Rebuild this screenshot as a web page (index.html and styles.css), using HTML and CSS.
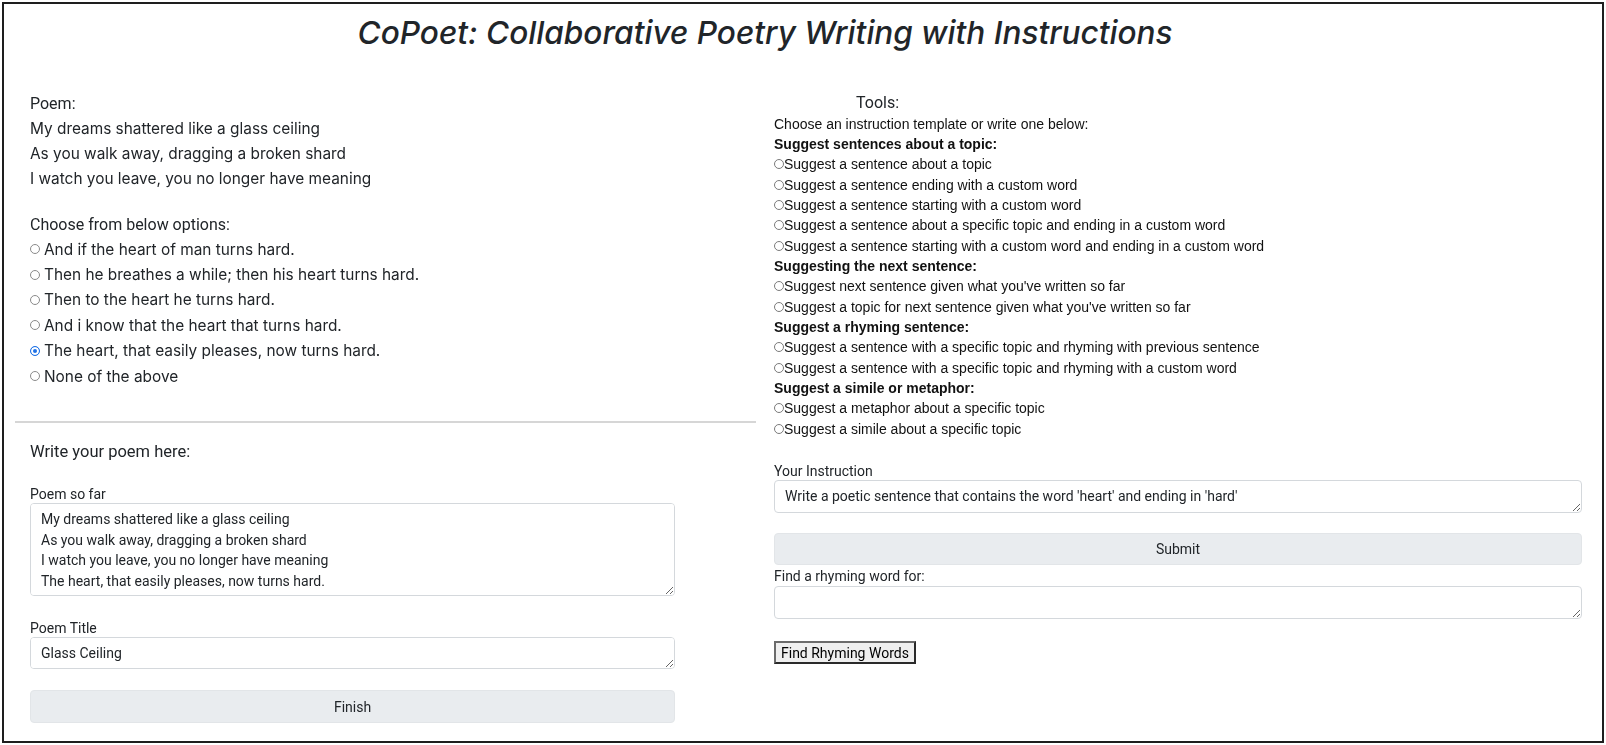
FILE: index.html
```html
<!DOCTYPE html>
<html lang="en">
<head>
    <meta charset="UTF-8">
    <meta name="viewport" content="width=device-width, initial-scale=1.0">
    <title>CoPoet: Collaborative Poetry Writing with Instructions</title>
    <link rel="stylesheet" href="styles.css">
</head>
<body>
    <div class="page">
        <h1 class="title">CoPoet: Collaborative Poetry Writing with Instructions</h1>

        <div class="columns">
            <div class="left-col">
                <div class="heading">Poem:</div>
                <div class="poem-lines">
                    <div>My dreams shattered like a glass ceiling</div>
                    <div>As you walk away, dragging a broken shard</div>
                    <div>I watch you leave, you no longer have meaning</div>
                </div>

                <div class="heading options-head">Choose from below options:</div>
                <label class="option"><input type="radio" name="next"> And if the heart of man turns hard.</label>
                <label class="option"><input type="radio" name="next"> Then he breathes a while; then his heart turns hard.</label>
                <label class="option"><input type="radio" name="next"> Then to the heart he turns hard.</label>
                <label class="option"><input type="radio" name="next"> And i know that the heart that turns hard.</label>
                <label class="option"><input type="radio" name="next" checked> The heart, that easily pleases, now turns hard.</label>
                <label class="option"><input type="radio" name="next"> None of the above</label>

                <hr class="divider">

                <div class="heading write-head">Write your poem here:</div>
                <div class="poem-form">
                    <label class="field-label first">Poem so far</label>
                    <textarea class="field poem-box">My dreams shattered like a glass ceiling
As you walk away, dragging a broken shard
I watch you leave, you no longer have meaning
The heart, that easily pleases, now turns hard.</textarea>

                    <label class="field-label title-label">Poem Title</label>
                    <textarea class="field short-box">Glass Ceiling</textarea>

                    <button class="wide-btn finish-btn">Finish</button>
                </div>
            </div>

            <div class="right-col">
                <div class="heading tools-head">Tools:</div>
                <div class="tools">
                    <div>Choose an instruction template or write one below:</div>
                    <div class="group">Suggest sentences about a topic:</div>
                    <label class="tool"><input type="radio" name="tmpl">Suggest a sentence about a topic</label>
                    <label class="tool"><input type="radio" name="tmpl">Suggest a sentence ending with a custom word</label>
                    <label class="tool"><input type="radio" name="tmpl">Suggest a sentence starting with a custom word</label>
                    <label class="tool"><input type="radio" name="tmpl">Suggest a sentence about a specific topic and ending in a custom word</label>
                    <label class="tool"><input type="radio" name="tmpl">Suggest a sentence starting with a custom word and ending in a custom word</label>
                    <div class="group">Suggesting the next sentence:</div>
                    <label class="tool"><input type="radio" name="tmpl">Suggest next sentence given what you've written so far</label>
                    <label class="tool"><input type="radio" name="tmpl">Suggest a topic for next sentence given what you've written so far</label>
                    <div class="group">Suggest a rhyming sentence:</div>
                    <label class="tool"><input type="radio" name="tmpl">Suggest a sentence with a specific topic and rhyming with previous sentence</label>
                    <label class="tool"><input type="radio" name="tmpl">Suggest a sentence with a specific topic and rhyming with a custom word</label>
                    <div class="group">Suggest a simile or metaphor:</div>
                    <label class="tool"><input type="radio" name="tmpl">Suggest a metaphor about a specific topic</label>
                    <label class="tool"><input type="radio" name="tmpl">Suggest a simile about a specific topic</label>
                </div>

                <label class="field-label instr-label">Your Instruction</label>
                <textarea class="field short-box instr-box">Write a poetic sentence that contains the word 'heart' and ending in 'hard'</textarea>

                <button class="wide-btn submit-btn">Submit</button>

                <label class="field-label rhyme-label">Find a rhyming word for:</label>
                <textarea class="field short-box rhyme-box"></textarea>

                <button class="plain-btn">Find Rhyming Words</button>
            </div>
        </div>
    </div>
</body>
</html>
```

FILE: styles.css
```css
html, body {
    margin: 0;
    padding: 0;
    background-color: #fff;
}
body {
    font-family: 'Roboto', 'Liberation Sans', sans-serif;
    color: #212529;
}
.page {
    margin: 2px;
    height: calc(100vh - 4px);
    box-sizing: border-box;
    border: 2px solid #1e1e1e;
    overflow: hidden;
}
.title {
    margin: 10px 0 0 0;
    padding-right: 76px;
    font-family: 'Inter', sans-serif;
    font-style: italic;
    font-weight: 500;
    font-size: 31.6px;
    line-height: 38px;
    text-align: center;
    color: #212529;
}
.columns {
    display: grid;
    grid-template-columns: 744px 1fr;
    padding: 0 5px 0 11px;
    margin-top: 38.5px;
}
.left-col {
    padding: 0 0 0 15px;
}
.right-col {
    padding: 0 15px;
}
.heading {
    font-size: 16px;
    line-height: 25px;
}
.poem-lines,
.option {
    font-family: 'Inter', sans-serif;
    font-size: 15.4px;
    line-height: 25px;
}
.options-head {
    margin-top: 21px;
}
.option {
    display: flex;
    align-items: center;
    line-height: 25.4px;
}
.option input,
.tool input {
    appearance: none;
    -webkit-appearance: none;
    width: 10px;
    height: 10px;
    margin: 0 4px 0 0;
    border: 1px solid #8a8a8a;
    border-radius: 50%;
    background: #fff;
    box-sizing: border-box;
    flex-shrink: 0;
}
.option input:checked {
    border-color: #1f72e6;
    background: #1f72e6;
    box-shadow: inset 0 0 0 2px #fff;
    border-width: 1px;
}
.divider {
    margin: 32px 0 0 -15px;
    width: 741px;
    border: 0;
    border-top: 2px solid #d6d6d6;
}
.write-head {
    margin-top: 16px;
    font-size: 16.5px;
}
.poem-form {
    width: 645px;
}
.field-label {
    display: block;
    font-size: 14px;
    line-height: 18px;
}
.field-label.first {
    margin-top: 21.5px;
}
.title-label {
    margin-top: 23px;
}
.field {
    display: block;
    width: 100%;
    box-sizing: border-box;
    border: 1px solid #d4d8dc;
    border-radius: 4px;
    padding: 5px 10px;
    font-family: 'Roboto', sans-serif;
    font-size: 14px;
    line-height: 20.5px;
    color: #212529;
    margin: 0;
    resize: vertical;
}
.poem-box {
    height: 93px;
}
.short-box {
    height: 32px;
}
.wide-btn {
    display: block;
    width: 100%;
    background-color: #e9ecef;
    border: 1px solid #e2e5e8;
    border-radius: 4px;
    font-family: 'Roboto', sans-serif;
    font-size: 14px;
    color: #212529;
    cursor: pointer;
}
.finish-btn {
    margin-top: 21px;
    height: 33px;
}
.tools-head {
    margin-top: -1px;
    padding-left: 82px;
}
.tools {
    margin-top: -1px;
    font-family: 'Liberation Sans', Arial, sans-serif;
    font-size: 14px;
    line-height: 20.35px;
    color: #111;
}
.group {
    font-weight: bold;
}
.tool {
    display: flex;
    align-items: center;
}
.tool input {
    margin: 0;
    border-color: #7a7a7a;
}
.instr-label {
    margin-top: 23px;
}
.instr-box {
    height: 33px;
}
.submit-btn {
    margin-top: 20px;
    height: 32px;
}
.rhyme-label {
    margin-top: 2px;
}
.rhyme-box {
    margin-top: 1px;
    height: 33px;
}
.plain-btn {
    display: block;
    margin-top: 22px;
    height: 23px;
    padding: 0 5px;
    background-color: #efefef;
    border: 2px solid;
    border-color: #6b6b6b #2a2a2a #2a2a2a #6b6b6b;
    font-family: 'Roboto', sans-serif;
    font-size: 14px;
    color: #000;
    cursor: pointer;
}
```
